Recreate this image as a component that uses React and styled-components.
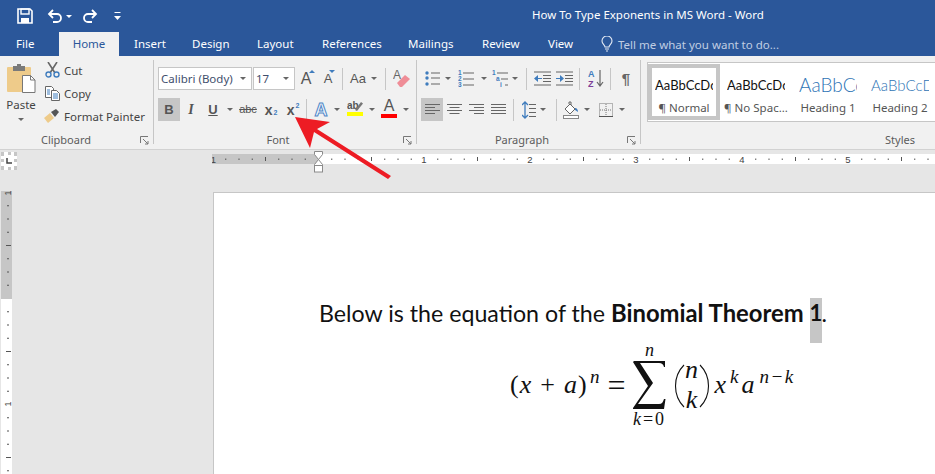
import React from "react";
import styled, { createGlobalStyle } from "styled-components";

const GlobalStyle = createGlobalStyle`
  html, body { margin: 0; padding: 0; }
  body { font-family: "Noto Sans", "Open Sans", sans-serif; background: #e6e6e6; }
`;

const Window = styled.div`
  position: relative;
  width: 935px;
  height: 474px;
  overflow: hidden;
  display: flex;
  flex-direction: column;
  background: #e6e6e6;
`;

const TitleBar = styled.div`
  height: 32px;
  background: #2b579a;
  display: flex;
  align-items: center;
  color: #fff;
  font-size: 11.5px;
`;

const QatSlot = styled.div`
  width: ${(p) => p.$w}px;
  display: flex;
  justify-content: center;
  align-items: center;
`;

const DocTitle = styled.div`
  margin-left: 410px;
  white-space: nowrap;
  padding-bottom: 3px;
`;

const TabBar = styled.div`
  height: 24px;
  background: #2b579a;
  display: flex;
  color: #fff;
  font-size: 11.5px;
`;

const Tab = styled.div`
  width: ${(p) => p.$w}px;
  display: flex;
  align-items: center;
  padding-left: ${(p) => p.$pad || 0}px;
  padding-bottom: 1px;
  box-sizing: border-box;
  white-space: nowrap;
  background: ${(p) => (p.$active ? "#f1f1f1" : "transparent")};
  color: ${(p) => (p.$active ? "#2b579a" : "#fff")};
  justify-content: ${(p) => (p.$active ? "center" : "flex-start")};
`;

const TellMe = styled.div`
  display: flex;
  align-items: center;
  gap: 5px;
  color: #c0cee3;
`;

const Ribbon = styled.div`
  height: 93px;
  background: #f1f1f1;
  border-bottom: 1px solid #d2d2d2;
  display: flex;
  color: #444;
  font-size: 11.5px;
`;

const Group = styled.div`
  position: relative;
  width: ${(p) => p.$w}px;
  flex: none;
  height: 100%;
  box-sizing: border-box;
  display: flex;
  flex-direction: column;
  &::after {
    content: "";
    display: ${(p) => (p.$last ? "none" : "block")};
    position: absolute;
    right: 0;
    top: 4px;
    bottom: 5px;
    width: 1px;
    background: #c6c6c6;
  }
`;

const GroupBody = styled.div`
  height: 75px;
  display: flex;
  flex-direction: ${(p) => (p.$row ? "row" : "column")};
  padding: ${(p) => p.$pad};
  box-sizing: border-box;
`;

const GroupLabel = styled.div`
  text-align: center;
  color: #5c5c5c;
  font-size: 11px;
  line-height: 17px;
  padding-right: ${(p) => p.$shift || 0}px;
  padding-left: ${(p) => p.$left || 0}px;
  margin-top: ${(p) => p.$top || 0}px;
`;

const Launcher = styled.svg`
  position: absolute;
  right: 5px;
  bottom: 4px;
`;

const PasteCol = styled.div`
  width: 42px;
  display: flex;
  flex-direction: column;
  align-items: center;
  margin-right: 2px;
`;

const PasteLabel = styled.div`
  margin-top: 5px;
  line-height: 14px;
`;

const PasteCaret = styled.div`
  margin-top: 5px;
  line-height: 0;
`;

const ClipList = styled.div`
  display: flex;
  flex-direction: column;
  gap: 3px;
  margin-top: -4px;
`;

const ClipRow = styled.div`
  height: 20px;
  display: flex;
  align-items: center;
  gap: 4px;
  white-space: nowrap;
`;

const ClipIcon = styled.div`
  width: 16px;
  display: flex;
  justify-content: center;
`;

const ToolRow = styled.div`
  height: 23px;
  display: flex;
  align-items: center;
  margin-bottom: ${(p) => p.$mb || 0}px;
`;

const Combo = styled.div`
  width: ${(p) => p.$w}px;
  height: 23px;
  flex: none;
  box-sizing: border-box;
  background: #fff;
  border: 1px solid #c6c6c6;
  margin-right: ${(p) => p.$mr || 0}px;
  padding: 0 5px 0 2px;
  display: flex;
  align-items: center;
  justify-content: space-between;
  color: #3f4f6d;
  white-space: nowrap;
`;

const Btn = styled.div`
  width: ${(p) => p.$w}px;
  height: 23px;
  flex: none;
  display: flex;
  align-items: center;
  justify-content: center;
  position: relative;
  background: ${(p) => (p.$on ? "#c6c6c6" : "transparent")};
`;

const Caret = styled.span`
  display: inline-block;
  flex: none;
  width: 0;
  height: 0;
  border-left: 3.5px solid transparent;
  border-right: 3.5px solid transparent;
  border-top: 3.5px solid ${(p) => p.$color || "#666"};
`;

const Sep = styled.div`
  width: 1px;
  height: 22px;
  flex: none;
  background: #c6c6c6;
  margin-left: ${(p) => p.$l}px;
  margin-right: ${(p) => p.$r}px;
`;

const Glyph = styled.span`
  font-family: ${(p) => (p.$serif ? '"Liberation Serif", serif' : '"Liberation Sans", Arial, sans-serif')};
  font-weight: ${(p) => (p.$bold ? 700 : 400)};
  font-style: ${(p) => (p.$italic ? "italic" : "normal")};
  font-size: ${(p) => p.$size || 13}px;
  color: ${(p) => p.$color || "#555"};
  text-decoration: ${(p) => p.$deco || "none"};
  line-height: 1;
`;

const Tiny = styled.span`
  font-family: "Liberation Sans", sans-serif;
  font-size: 7px;
  font-weight: 700;
  color: #3f7cbd;
  position: relative;
  top: ${(p) => p.$top}px;
  margin-left: 1px;
`;

const Outlined = styled(Glyph)`
  color: #f4f8fd;
  font-weight: 700;
  -webkit-text-stroke: 1px #4f87c7;
  font-size: 18px;
`;

const BarLetter = styled.div`
  display: flex;
  flex-direction: column;
  align-items: center;
  width: 16px;
  line-height: 1;
  margin-bottom: 3px;
`;

const ColorBar = styled.div`
  width: 16px;
  height: 4px;
  background: ${(p) => p.$color};
`;

const SmallUp = styled.span`
  position: absolute;
  top: 3px;
  right: ${(p) => p.$r}px;
  width: 0;
  height: 0;
  border-left: 3px solid transparent;
  border-right: 3px solid transparent;
  ${(p) => (p.$down ? "border-top" : "border-bottom")}: 3px solid #3f7cbd;
`;

const Gallery = styled.div`
  margin: 6px 0 0 6px;
  height: 60px;
  background: #fff;
  border: 1px solid #c6c6c6;
  border-right: none;
  display: flex;
  box-sizing: border-box;
  padding: 1px 0;
`;

const StyleItem = styled.div`
  width: 72px;
  flex: none;
  box-sizing: border-box;
  border: 4px solid ${(p) => (p.$on ? "#c6c6c6" : "transparent")};
  display: flex;
  flex-direction: column;
  align-items: center;
  color: #555;
  font-size: 11.5px;
`;

const StyleSample = styled.div`
  width: 58px;
  height: 32px;
  overflow: hidden;
  white-space: nowrap;
  font-family: Lato, "Liberation Sans", sans-serif;
  font-size: ${(p) => p.$size}px;
  font-weight: ${(p) => (p.$light ? 300 : 400)};
  line-height: 34px;
  color: ${(p) => p.$color};
`;

const StyleName = styled.div`
  line-height: 16px;
  white-space: nowrap;
`;

const RulerRow = styled.div`
  height: 21px;
  display: flex;
  align-items: center;
`;

const TabStop = styled.div`
  width: 11px;
  height: 12px;
  margin-left: 1px;
  border: 3px dotted #c6c6c6;
  background: #fff;
  display: flex;
  align-items: center;
  justify-content: center;
`;

const HRuler = styled.svg`
  margin: 0 0 3px 195px;
  flex: none;
  display: block;
`;

const IndentMark = styled.svg`
  position: absolute;
  left: 313px;
  top: 151px;
`;

const Workspace = styled.div`
  flex: 1;
  display: flex;
  align-items: flex-start;
  padding-top: 20px;
  min-height: 0;
`;

const VRuler = styled.svg`
  margin-left: 1px;
  flex: none;
  display: block;
`;

const Page = styled.div`
  margin-left: 200px;
  flex: 1;
  height: 300px;
  margin-top: 1px;
  background: #fff;
  border: 1px solid #c6c6c6;
  border-right: none;
  padding: 105px 0 0 105px;
  color: #111;
`;

const Para = styled.div`
  font-family: Lato, Carlito, "Liberation Sans", sans-serif;
  font-size: 23.2px;
  line-height: 30px;
  white-space: nowrap;
  height: 45px;
`;

const Strong = styled.b`
  font-size: 23.8px;
  margin-right: 6px;
`;

const Marked = styled.span`
  display: inline-block;
  vertical-align: top;
  width: 12px;
  height: 45px;
  background: #c6c6c6;
  font-size: 22px;
  font-weight: 700;
  text-align: center;
`;

const Equation = styled.div`
  margin: 1px 0 0 191px;
  height: 84px;
  display: flex;
  align-items: center;
  font-family: "Liberation Serif", serif;
  font-size: 26px;
  color: #111;
  white-space: nowrap;
`;

const MathRun = styled.span`
  margin-left: ${(p) => p.$ml || 0}px;
  margin-bottom: 2px;
  font-style: italic;
  letter-spacing: ${(p) => p.$track || 0}px;
`;

const EqualSign = styled.span`
  margin: 0 0 3px 8px;
  font-size: 32px;
  line-height: 1;
`;

const Upright = styled.span`
  font-style: normal;
`;

const Sup = styled.span`
  font-size: 19px;
  vertical-align: 10px;
  line-height: 0;
  letter-spacing: ${(p) => p.$track || 0}px;
  margin-left: ${(p) => p.$ml || 0}px;
`;

const SumCol = styled.div`
  width: 36px;
  margin-left: 6px;
  display: flex;
  flex-direction: column;
  align-items: center;
  font-size: 18px;
  font-style: italic;
  line-height: 16px;
`;

const SumUpper = styled.span`
  margin: -3px 0 3px;
`;

const SumLower = styled.span`
  letter-spacing: 2px;
`;

const SumIcon = styled.svg`
  margin: 0 0 2px;
  display: block;
`;

const Binom = styled.div`
  margin-left: 6px;
  display: flex;
  align-items: center;
`;

const BinomParen = styled.svg`
  transform: ${(p) => (p.$flip ? "scaleX(-1)" : "none")};
  display: block;
`;

const BinomStack = styled.div`
  width: 14px;
  height: 48px;
  margin-top: -2px;
  display: flex;
  flex-direction: column;
  justify-content: space-between;
  align-items: center;
  font-style: italic;
  line-height: 18px;
`;

const MirrorIcon = styled.svg`
  transform: ${(p) => (p.$flip ? "scaleX(-1)" : "none")};
`;

const Arrow = styled.svg`
  position: absolute;
  left: 290px;
  top: 112px;
`;

const Line = ({ x, y, w, color = "#666", h = 1 }) => <rect x={x} y={y} width={w} height={h} fill={color} />;

const SaveIcon = () => (
  <svg width="16" height="16" viewBox="0 0 16 16">
    <path d="M1 1h12l2 2v12H1z" fill="none" stroke="#fff" strokeWidth="1.6" />
    <rect x="4" y="1" width="8" height="5" fill="none" stroke="#fff" strokeWidth="1.4" />
    <rect x="4" y="10" width="8" height="5" fill="#fff" />
  </svg>
);

const UndoIcon = ({ flip }) => (
  <MirrorIcon $flip={flip} width="16" height="14" viewBox="0 0 16 14">
    <path d="M2 5h8a4 4 0 0 1 0 8H6" fill="none" stroke="#fff" strokeWidth="1.8" />
    <path d="M6 1 2 5l4 4" fill="none" stroke="#fff" strokeWidth="1.8" />
  </MirrorIcon>
);

const QatMore = () => (
  <svg width="7" height="8" viewBox="0 0 7 8">
    <rect x="0.5" y="0" width="6" height="1" fill="#fff" />
    <path d="M0 4h7L3.5 8z" fill="#fff" />
  </svg>
);

const Bulb = () => (
  <svg width="12" height="16" viewBox="0 0 12 16">
    <path d="M4 11c0-2-3-3-3-6a5 5 0 0 1 10 0c0 3-3 4-3 6z" fill="none" stroke="#e4eaf4" strokeWidth="1.1" />
    <path d="M4 13h4M5 15h2" stroke="#e4eaf4" strokeWidth="1.1" />
  </svg>
);

const PasteIcon = () => (
  <svg width="29" height="29" viewBox="0 0 29 29">
    <rect x="0" y="3" width="24" height="25" rx="1" fill="#eecb8a" />
    <rect x="6" y="2" width="12" height="5" fill="#7a7a7a" />
    <rect x="10" y="0" width="4" height="3" fill="#7a7a7a" />
    <path d="M15.500 11.500h8l4.500 4.500v12.500h-12.500z" fill="#fff" stroke="#777" />
    <path d="M23.500 11.500v4.500h4.500" fill="none" stroke="#777" />
  </svg>
);

const ScissorsIcon = () => (
  <svg width="15" height="16" viewBox="0 0 15 16">
    <path d="M3 0l7 11M12 0 5 11" stroke="#666" strokeWidth="1.6" />
    <circle cx="3.500" cy="12.500" r="2.500" fill="none" stroke="#3f7cbd" strokeWidth="1.400" />
    <circle cx="11.500" cy="12.500" r="2.500" fill="none" stroke="#3f7cbd" strokeWidth="1.400" />
  </svg>
);

const CopyIcon = () => (
  <svg width="15" height="15" viewBox="0 0 15 15">
    <path d="M.5.5h6l2 2v9h-8z" fill="#fff" stroke="#666" />
    <path d="M6.500 4.500h5l3 3v7h-8z" fill="#fff" stroke="#666" />
    <path d="M2 4h3M2 6h3M2 8h3M8 8h5M8 10h5M8 12h5" stroke="#3f7cbd" />
  </svg>
);

const BrushIcon = () => (
  <svg width="16" height="14" viewBox="0 0 16 14">
    <path d="M0 9l6-5 4 5-6 5z" fill="#eecb8a" />
    <path d="M7 3l5-3 3 3-4 5z" fill="#555" />
  </svg>
);

const LauncherIcon = () => (
  <Launcher width="9" height="9" viewBox="0 0 9 9">
    <path d="M.5 7V.5H8" fill="none" stroke="#777" />
    <path d="M3 3l5 5M5 8h3V5" fill="none" stroke="#777" />
  </Launcher>
);

const EraserIcon = () => (
  <svg width="18" height="20" viewBox="0 0 18 20">
    <text x="0" y="10" fontSize="12" fontFamily="Liberation Sans" fill="#666">A</text>
    <path d="M4 14l8-8 5 4-8 8H7z" fill="#ef8d97" />
  </svg>
);

const BulletsIcon = () => (
  <svg width="15" height="15" viewBox="0 0 15 15">
    {[1, 6, 12].map((y) => (
      <g key={y}>
        <circle cx="2" cy={y + 1} r="1.700" fill="#3f7cbd" />
        <Line x={6} y={y + 0.5} w={9} />
      </g>
    ))}
  </svg>
);

const ListIcon = ({ marks, w = 16 }) => (
  <svg width={w} height="17" viewBox={`0 0 ${w} 17`}>
    {marks.map((m, i) => (
      <g key={i}>
        <text x={m.x || 0} y={5 + i * 6} fontSize="6.500" fontWeight="700" fontFamily="Liberation Sans" fill="#3f7cbd">{m.t}</text>
        <Line x={(m.x || 0) + 5} y={2.500 + i * 6} w={w - 5 - (m.x || 0)} />
      </g>
    ))}
  </svg>
);

const IndentIcon = ({ flip }) => (
  <svg width="17" height="15" viewBox="0 0 17 15">
    <Line x={0} y={0.500} w={17} />
    <Line x={0} y={13.500} w={17} />
    <Line x={9} y={4} w={8} />
    <Line x={9} y={7} w={8} />
    <Line x={9} y={10} w={8} />
    {flip ? <path d="M0 7h4V4l4 3.500L4 11V8H0z" fill="#3f7cbd" /> : <path d="M8 7H4V4L0 7.500 4 11V8h4z" fill="#3f7cbd" />}
  </svg>
);

const SortIcon = () => (
  <svg width="16" height="20" viewBox="0 0 16 20">
    <text x="0" y="8" fontSize="9" fontWeight="700" fontFamily="Liberation Sans" fill="#3f7cbd">A</text>
    <text x="0" y="18" fontSize="9" fontWeight="700" fontFamily="Liberation Sans" fill="#7d3f98">Z</text>
    <path d="M12 1v16M9 13l3 4 3-4" fill="none" stroke="#666" strokeWidth="1.200" />
  </svg>
);

const AlignIcon = ({ kind }) => {
  const short = kind === "justify" ? 15 : 10;
  const x = kind === "left" || kind === "justify" ? 0 : kind === "center" ? 2.500 : 5;
  return (
    <svg width="15" height="11" viewBox="0 0 15 11">
      <Line x={0} y={0} w={15} />
      <Line x={x} y={3} w={short} />
      <Line x={0} y={6} w={15} />
      <Line x={x} y={9} w={short} />
    </svg>
  );
};

const SpacingIcon = () => (
  <svg width="14" height="18" viewBox="0 0 14 18">
    <path d="M3 1v16M0 4l3-3 3 3M0 14l3 3 3-3" fill="none" stroke="#3f7cbd" strokeWidth="1.300" />
    <Line x={7} y={3} w={7} />
    <Line x={7} y={7} w={7} />
    <Line x={7} y={11} w={7} />
    <Line x={7} y={15} w={7} />
  </svg>
);

const ShadingIcon = () => (
  <svg width="17" height="18" viewBox="0 0 17 18">
    <path d="M2 8l5-5 5 5-5 5z" fill="#fff" stroke="#666" />
    <path d="M6 3V1h2v3" fill="none" stroke="#666" />
    <path d="M12 7c2 0 3 2 3 4-1-1-2-1-3-2z" fill="#3f7cbd" />
    <rect x=".5" y="14.500" width="15" height="3" fill="#fff" stroke="#888" />
  </svg>
);

const BordersIcon = () => (
  <svg width="14" height="14" viewBox="0 0 14 14">
    <rect x=".5" y=".5" width="13" height="13" fill="none" stroke="#777" strokeDasharray="1 1" />
    <path d="M7 1v12M1 7h12" stroke="#777" strokeDasharray="1 1" />
    <Line x={0} y={13} w={14} color="#555" />
  </svg>
);

const HighlightPen = () => (
  <svg width="16" height="12" viewBox="0 0 16 12">
    <text x="0" y="9" fontSize="10" fontWeight="700" fontFamily="Liberation Sans" fill="#555">ab</text>
    <path d="M8 10l6-8 2 1.500L10 11z" fill="#777" />
  </svg>
);

const rulerTicks = () => {
  const ticks = [];
  for (let i = -8; i < 50; i++) {
    if (i % 8 === 0) continue;
    const x = 106 + i * 13.25;
    const major = i % 4 === 0;
    ticks.push(<Line key={i} x={x} y={major ? 3 : 4.500} w={1} h={major ? 4 : 1.500} color="#555" />);
  }
  return ticks;
};

const HorizontalRuler = () => (
  <HRuler width="723" height="10" viewBox="0 0 723 10">
    <rect x="0" y="0" width="106" height="10" fill="#c6c6c6" />
    <rect x="106" y="0" width="617" height="10" fill="#fff" />
    {rulerTicks()}
    {[[1.500, 1], [212, 1], [318, 2], [424, 3], [530, 4], [636, 5]].map(([x, n]) => (
      <text key={x} x={x} y="9" textAnchor="middle" fontSize="9.500" fontFamily="Liberation Sans" fill="#444">{n}</text>
    ))}
  </HRuler>
);

const VerticalRuler = () => {
  const marks = [];
  for (let i = 1; i < 22; i++) {
    if (i % 8 === 0) continue;
    const major = i % 4 === 0;
    marks.push(<Line key={i} x={major ? 5 : 6} y={1 + i * 13.25} w={major ? 5 : 2} color="#555" />);
  }
  return (
    <VRuler width="12" height="283" viewBox="0 0 12 283">
      <rect width="11" height="108" fill="#c6c6c6" />
      <rect y="108" width="11" height="175" fill="#fff" />
      {marks}
      {[2, 213].map((y) => (
        <text key={y} transform={`translate(10 ${y}) rotate(-90)`} textAnchor="middle" fontSize="9" fontFamily="Liberation Sans" fill="#444">1</text>
      ))}
    </VRuler>
  );
};

const Sigma = () => (
  <SumIcon width="33" height="48" viewBox="0 0 33 48">
    <path d="M1 0h31v6l-1 0c-1-3-2-4-5-4H7l13 20L5 43h21c3 0 4-2 5-5h1.500L31 48H0v-1l15-22L0 1z" fill="#111" />
  </SumIcon>
);

const Paren = ({ flip }) => (
  <BinomParen $flip={flip} width="11" height="44" viewBox="0 0 11 44">
    <path d="M10 1C4 7 1.500 14 1.500 22S4 37 10 43" fill="none" stroke="#111" strokeWidth="1.100" />
  </BinomParen>
);

const App = () => (
  <Window>
    <GlobalStyle />
    <TitleBar>
      <QatSlot $w={17} />
      <QatSlot $w={16}><SaveIcon /></QatSlot>
      <QatSlot $w={13} />
      <QatSlot $w={17}><UndoIcon /></QatSlot>
      <QatSlot $w={12}><Caret $color="#fff" /></QatSlot>
      <QatSlot $w={6} />
      <QatSlot $w={17}><UndoIcon flip /></QatSlot>
      <QatSlot $w={15} />
      <QatSlot $w={9}><QatMore /></QatSlot>
      <DocTitle>How To Type Exponents in MS Word - Word</DocTitle>
    </TitleBar>

    <TabBar>
      <Tab $w={59} $pad={16}>File</Tab>
      <Tab $w={60} $active>Home</Tab>
      <Tab $w={73} $pad={15}>Insert</Tab>
      <Tab $w={65}>Design</Tab>
      <Tab $w={65}>Layout</Tab>
      <Tab $w={86}>References</Tab>
      <Tab $w={74}>Mailings</Tab>
      <Tab $w={66}>Review</Tab>
      <Tab $w={53}>View</Tab>
      <TellMe><Bulb /><span>Tell me what you want to do...</span></TellMe>
    </TabBar>

    <Ribbon>
      <Group $w={154}>
        <GroupBody $row $pad="8px 0 0 0">
          <PasteCol>
            <PasteIcon />
            <PasteLabel>Paste</PasteLabel>
            <PasteCaret><Caret /></PasteCaret>
          </PasteCol>
          <ClipList>
            <ClipRow><ClipIcon><ScissorsIcon /></ClipIcon>Cut</ClipRow>
            <ClipRow><ClipIcon><CopyIcon /></ClipIcon>Copy</ClipRow>
            <ClipRow><ClipIcon><BrushIcon /></ClipIcon>Format Painter</ClipRow>
          </ClipList>
        </GroupBody>
        <GroupLabel $shift={22}>Clipboard</GroupLabel>
        <LauncherIcon />
      </Group>

      <Group $w={263}>
        <GroupBody $pad="11px 0 0 4px">
          <ToolRow $mb={8}>
            <Combo $w={94} $mr={1}>Calibri (Body)<Caret /></Combo>
            <Combo $w={42}>17<Caret /></Combo>
            <Btn $w={22}><Glyph $size={16}>A</Glyph><SmallUp $r={2} /></Btn>
            <Btn $w={22}><Glyph $size={13}>A</Glyph><SmallUp $r={4} $down /></Btn>
            <Sep $l={3} $r={3} />
            <Btn $w={24}><Glyph $size={13}>Aa</Glyph></Btn>
            <Btn $w={8}><Caret /></Btn>
            <Sep $l={7} $r={7} />
            <Btn $w={18}><EraserIcon /></Btn>
          </ToolRow>
          <ToolRow>
            <Btn $w={22} $on><Glyph $bold>B</Glyph></Btn>
            <Btn $w={22}><Glyph $serif $italic $bold $size={14}>I</Glyph></Btn>
            <Btn $w={22}><Glyph $bold $deco="underline">U</Glyph></Btn>
            <Btn $w={12}><Caret /></Btn>
            <Btn $w={24}><Glyph $size={11} $deco="line-through">abc</Glyph></Btn>
            <Btn $w={22}><Glyph $bold $size={14}>x</Glyph><Tiny $top={3}>2</Tiny></Btn>
            <Btn $w={22}><Glyph $bold $size={14}>x</Glyph><Tiny $top={-4}>2</Tiny></Btn>
            <Sep $l={2} $r={2} />
            <Btn $w={24}><Outlined>A</Outlined></Btn>
            <Btn $w={8}><Caret /></Btn>
            <Btn $w={28}><BarLetter><HighlightPen /><ColorBar $color="#ffff00" /></BarLetter></Btn>
            <Btn $w={6}><Caret /></Btn>
            <Btn $w={28}><BarLetter><Glyph $size={16}>A</Glyph><ColorBar $color="#ff0000" /></BarLetter></Btn>
            <Btn $w={6}><Caret /></Btn>
          </ToolRow>
        </GroupBody>
        <GroupLabel $shift={15}>Font</GroupLabel>
        <LauncherIcon />
      </Group>

      <Group $w={224}>
        <GroupBody $pad="11px 0 0 4px">
          <ToolRow $mb={8}>
            <Btn $w={22}><BulletsIcon /></Btn>
            <Btn $w={10}><Caret /></Btn>
            <Btn $w={26}><ListIcon marks={[{ t: "1" }, { t: "2" }, { t: "3" }]} /></Btn>
            <Btn $w={9}><Caret /></Btn>
            <Btn $w={24}><ListIcon marks={[{ t: "1" }, { t: "a", x: 4 }, { t: "i", x: 8 }]} /></Btn>
            <Btn $w={5}><Caret /></Btn>
            <Sep $l={9} $r={4} />
            <Btn $w={22}><IndentIcon /></Btn>
            <Btn $w={22}><IndentIcon flip /></Btn>
            <Sep $l={4} $r={4} />
            <Btn $w={24}><SortIcon /></Btn>
            <Sep $l={2} $r={3} />
            <Btn $w={24}><Glyph $size={15} $bold $color="#666">¶</Glyph></Btn>
          </ToolRow>
          <ToolRow>
            <Btn $w={22} $on><AlignIcon kind="left" /></Btn>
            <Btn $w={22}><AlignIcon kind="center" /></Btn>
            <Btn $w={22}><AlignIcon kind="right" /></Btn>
            <Btn $w={22}><AlignIcon kind="justify" /></Btn>
            <Sep $l={4} $r={5} />
            <Btn $w={20}><SpacingIcon /></Btn>
            <Btn $w={8}><Caret /></Btn>
            <Sep $l={9} $r={3} />
            <Btn $w={22}><ShadingIcon /></Btn>
            <Btn $w={10}><Caret /></Btn>
            <Btn $w={27}><BordersIcon /></Btn>
            <Btn $w={6}><Caret /></Btn>
          </ToolRow>
        </GroupBody>
        <GroupLabel $shift={14}>Paragraph</GroupLabel>
        <LauncherIcon />
      </Group>

      <Group $w={294} $last>
        <Gallery>
          <StyleItem $on><StyleSample $size={13} $color="#111">AaBbCcDc</StyleSample><StyleName>¶ Normal</StyleName></StyleItem>
          <StyleItem><StyleSample $size={13} $color="#111">AaBbCcDc</StyleSample><StyleName>¶ No Spac...</StyleName></StyleItem>
          <StyleItem><StyleSample $size={19} $light $color="#2e74b5">AaBbCc</StyleSample><StyleName>Heading 1</StyleName></StyleItem>
          <StyleItem><StyleSample $size={15} $light $color="#2e74b5">AaBbCcD</StyleSample><StyleName>Heading 2</StyleName></StyleItem>
        </Gallery>
        <GroupLabel $left={224} $top={9}>Styles</GroupLabel>
      </Group>
    </Ribbon>

    <RulerRow>
      <TabStop>
        <svg width="6" height="6" viewBox="0 0 6 6"><path d="M1 0v5h5" fill="none" stroke="#444" strokeWidth="1.500" /></svg>
      </TabStop>
      <HorizontalRuler />
    </RulerRow>

    <Workspace>
      <VerticalRuler />
      <Page>
        <Para>
          Below is the equation of the <Strong>Binomial Theorem</Strong><Marked>1</Marked>.
        </Para>
        <Equation>
          <MathRun $track={1.2}><Upright>(</Upright>x <Upright>+</Upright> a<Upright>)</Upright><Sup $ml={2}>n</Sup></MathRun>
          <EqualSign>=</EqualSign>
          <SumCol>
            <SumUpper>n</SumUpper>
            <Sigma />
            <SumLower>k<Upright>=0</Upright></SumLower>
          </SumCol>
          <Binom>
            <Paren />
            <BinomStack><span>n</span><span>k</span></BinomStack>
            <Paren flip />
          </Binom>
          <MathRun $ml={5}>x<Sup $ml={4}>k</Sup></MathRun>
          <MathRun $ml={3}>a<Sup $ml={5} $track={1.5}>n−k</Sup></MathRun>
        </Equation>
      </Page>
    </Workspace>

    <IndentMark width="11" height="22" viewBox="0 0 11 22">
      <path d="M1.500.5h8v3l-4 5 4 5v1h-8v-1l4-5-4-5z" fill="#fff" stroke="#8a8a8a" />
      <rect x="1.500" y="14.500" width="8" height="6.500" fill="#fff" stroke="#8a8a8a" />
    </IndentMark>

    <Arrow width="110" height="70" viewBox="0 0 110 70">
      <path d="M5 5l35 5-13 7 74 47-3 3-74-47-4 16z" fill="#ed1c24" />
    </Arrow>
  </Window>
);

export default App;
